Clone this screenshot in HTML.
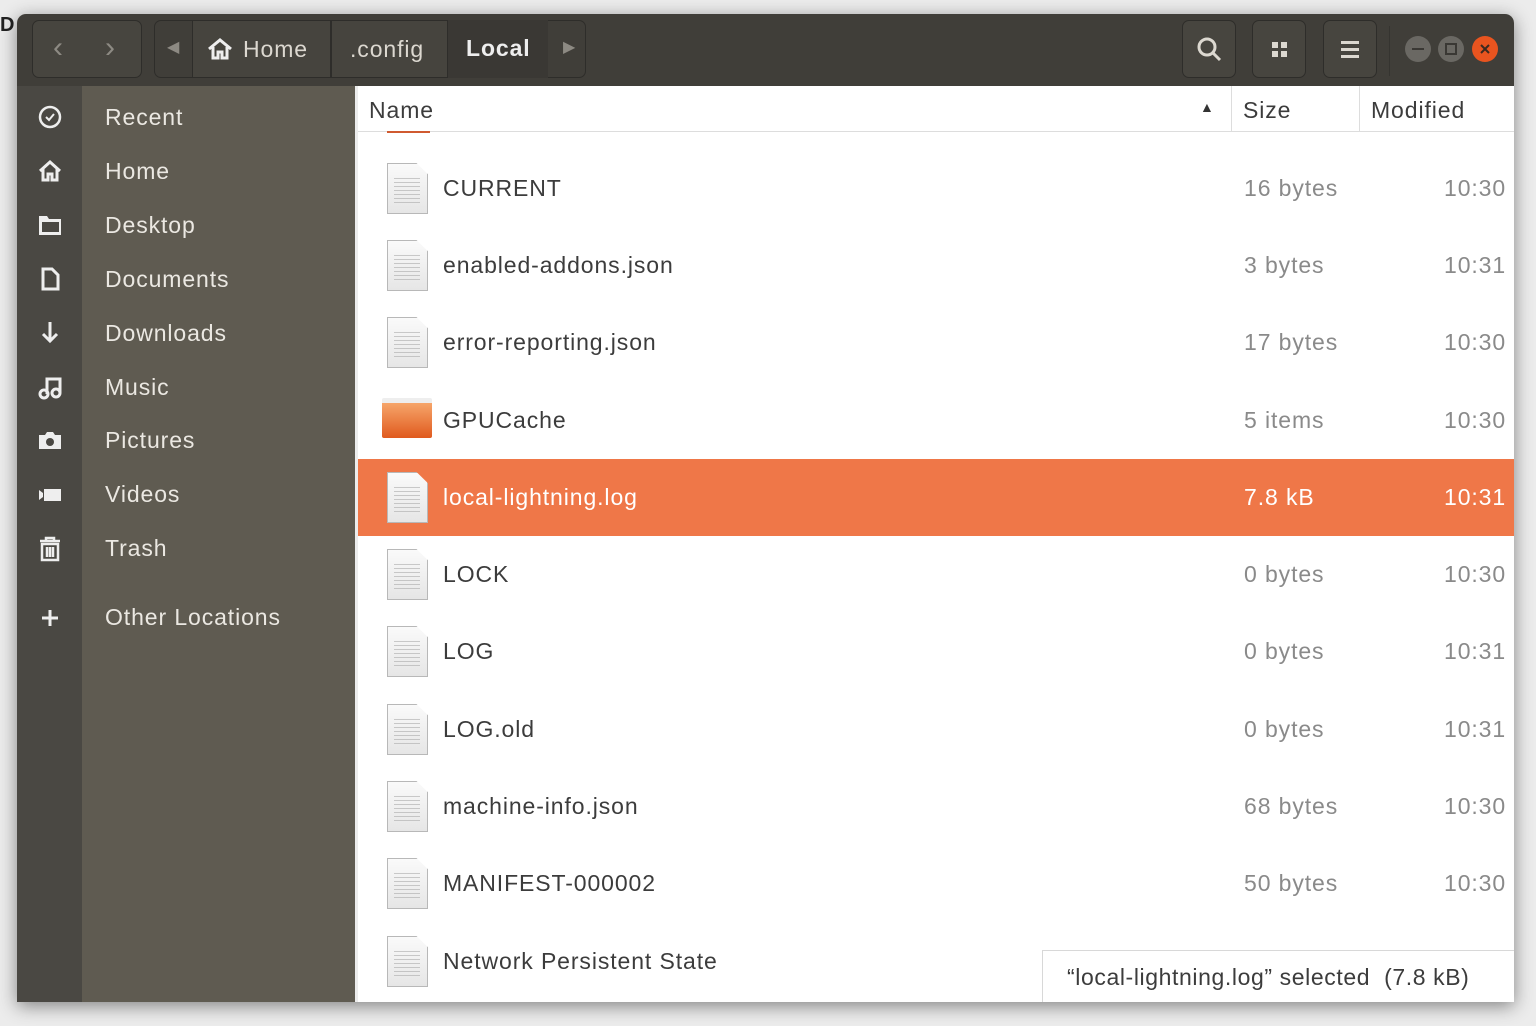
<!DOCTYPE html>
<html><head><meta charset="utf-8"><style>
*{margin:0;padding:0;box-sizing:border-box}
body{width:1536px;height:1026px;background:#ececec;position:relative;overflow:hidden;font-family:"Liberation Sans",sans-serif;letter-spacing:0.9px}
.win{position:absolute;left:17px;top:14px;width:1497px;height:988px;border-radius:9px 9px 0 0;overflow:hidden;box-shadow:0 4px 18px rgba(0,0,0,.45)}
.tb{position:absolute;left:0;top:0;width:100%;height:72px;background:#403e39}
.btn{position:absolute;top:6px;height:58px;border:1px solid #2e2d2a;border-radius:7px;background:#47453f;color:#dcd8d0}
.side1{position:absolute;left:0;top:72px;width:65px;height:916px;background:#4a4843}
.side2{position:absolute;left:65px;top:72px;width:273px;height:916px;background:#5f5b51}
.si{position:absolute;left:23px;font-size:23px;color:#ebe8e2}
.ic{position:absolute;left:20px;width:26px;height:26px}
.cont{position:absolute;left:341px;top:72px;width:1156px;height:916px;background:#fff}
.hdr{position:absolute;left:0;top:0;width:100%;height:46px;border-bottom:1px solid #ddd;font-size:23px;color:#3c3c3c}
.row{position:absolute;left:0;width:100%;height:77px;font-size:23px;color:#3c3c3c}
.row .n{position:absolute;left:85px;top:25px}
.row .s{position:absolute;left:886px;top:25px;color:#8a8a8a}
.row .m{position:absolute;left:1086px;top:25px;color:#8a8a8a}
.row.sel{background:#ef7748;color:#fff}
.row.sel .s,.row.sel .m{color:#fff}
.fi{position:absolute;left:29px;top:13px;width:41px;height:51px;background:linear-gradient(#fafafa,#e6e6e6);border:1px solid #b8b8b8;clip-path:polygon(0 0,72% 0,100% 22%,100% 100%,0 100%)}
.fi:after{content:"";position:absolute;left:6px;top:14px;width:26px;height:28px;background:repeating-linear-gradient(#aaa 0 1px,transparent 1px 4px);opacity:.6}
.fo{position:absolute;left:24px;top:16px;width:50px;height:40px;border-radius:2px;background:linear-gradient(#f6a56a,#e05a1e);border-top:5px solid #eee}
</style></head><body>
<div style="position:absolute;left:0;top:14px;font-size:20px;font-weight:bold;color:#222">D</div>
<div class="win">
 <div class="tb">
  <div class="btn" style="left:15px;width:110px"><span style="position:absolute;left:20px;top:10px;font-size:30px;color:#8d8a83">&lsaquo;</span><span style="position:absolute;left:72px;top:10px;font-size:30px;color:#8d8a83">&rsaquo;</span></div>
  <div class="btn" style="left:137px;width:432px;background:#403e39">
   <span style="position:absolute;left:12px;top:16px;font-size:16px;color:#8d8a83">&#9664;</span>
   <div style="position:absolute;left:37px;top:-1px;width:139px;height:58px;border:1px solid #2e2d2a;background:#46443e">
    <svg style="position:absolute;left:14px;top:16px" width="26" height="24" viewBox="0 0 26 24"><path d="M2 12L13 3l11 9M6 10v11h5v-6h4v6h5V10" fill="none" stroke="#eee" stroke-width="3"/></svg>
    <span style="position:absolute;left:50px;top:15px;font-size:23px">Home</span></div>
   <div style="position:absolute;left:176px;top:-1px;width:117px;height:58px;border:1px solid #2e2d2a;background:#46443e"><span style="position:absolute;left:18px;top:15px;font-size:23px">.config</span></div>
   <div style="position:absolute;left:293px;top:-1px;width:100px;height:58px;background:#3a3834"><span style="position:absolute;left:18px;top:15px;font-size:23px;font-weight:bold;color:#eee">Local</span></div>
   <span style="position:absolute;left:408px;top:16px;font-size:16px;color:#8d8a83">&#9654;</span>
  </div>
  <div class="btn" style="left:1165px;width:54px"><svg width="54" height="58" viewBox="0 0 54 58"><circle cx="24" cy="26" r="8" fill="none" stroke="#dcd8d0" stroke-width="3"/><path d="M30 32l7 7" stroke="#dcd8d0" stroke-width="3"/></svg></div>
  <div class="btn" style="left:1235px;width:54px"><svg width="54" height="58"><g fill="#dcd8d0"><rect x="19" y="21" width="6" height="6"/><rect x="28" y="21" width="6" height="6"/><rect x="19" y="30" width="6" height="6"/><rect x="28" y="30" width="6" height="6"/></g></svg></div>
  <div class="btn" style="left:1306px;width:54px"><svg width="54" height="58"><g fill="#dcd8d0"><rect x="17" y="20" width="18" height="3"/><rect x="17" y="27" width="18" height="3"/><rect x="17" y="34" width="18" height="3"/></g></svg></div>
  <div style="position:absolute;left:1372px;top:12px;width:1px;height:50px;background:#353430"></div>
  <svg style="position:absolute;left:1386px;top:20px" width="100" height="30" viewBox="0 0 100 30">
   <circle cx="15" cy="15" r="13" fill="#6a6863"/><path d="M9 15h12" stroke="#3a3834" stroke-width="2"/>
   <circle cx="48" cy="15" r="13" fill="#6a6863"/><rect x="43" y="10" width="10" height="10" fill="none" stroke="#3a3834" stroke-width="2"/>
   <circle cx="82" cy="15" r="13" fill="#e9541f"/><path d="M78 11l8 8M86 11l-8 8" stroke="#3a2a20" stroke-width="2"/>
  </svg>
 </div>
 <div class="side1">
  <svg class="ic" style="top:18px" viewBox="0 0 26 26"><circle cx="13" cy="13" r="10" fill="none" stroke="#eee" stroke-width="2.5"/><path d="M9 13l3 3 5-6" stroke="#eee" stroke-width="2" fill="none"/></svg>
  <svg class="ic" style="top:72px" viewBox="0 0 26 26"><path d="M3 13L13 4l10 9M6 11v11h5v-6h4v6h5V11" fill="none" stroke="#eee" stroke-width="3"/></svg>
  <svg class="ic" style="top:126px" viewBox="0 0 26 26"><path d="M2 4h8l2 3h12v16H2z" fill="#eee"/><rect x="5" y="10" width="17" height="10" fill="#4a4843"/></svg>
  <svg class="ic" style="top:180px" viewBox="0 0 26 26"><path d="M6 3h9l6 6v14H6z" fill="none" stroke="#eee" stroke-width="3"/></svg>
  <svg class="ic" style="top:234px" viewBox="0 0 26 26"><path d="M13 2v18M6 14l7 7 7-7" fill="none" stroke="#eee" stroke-width="3"/></svg>
  <svg class="ic" style="top:288px" viewBox="0 0 26 26"><circle cx="7" cy="20" r="4" fill="none" stroke="#eee" stroke-width="3"/><circle cx="19" cy="19" r="4" fill="none" stroke="#eee" stroke-width="3"/><path d="M10 20V5h13v14" fill="none" stroke="#eee" stroke-width="3"/></svg>
  <svg class="ic" style="top:342px" viewBox="0 0 26 26"><path d="M2 7h6l2-3h6l2 3h6v14H2z" fill="#eee"/><circle cx="13" cy="14" r="4" fill="#4a4843"/></svg>
  <svg class="ic" style="top:396px" viewBox="0 0 26 26"><path d="M2 8l4 3v4l-4 3zM7 7h17v12H7z" fill="#eee"/></svg>
  <svg class="ic" style="top:450px" viewBox="0 0 26 26"><path d="M3 5h20M9 5V2h8v3M5 8h16v16H5zM10 11v10M13 11v10M16 11v10" fill="none" stroke="#eee" stroke-width="2.5"/></svg>
  <svg class="ic" style="top:519px" viewBox="0 0 26 26"><path d="M13 5v16M5 13h16" stroke="#eee" stroke-width="3"/></svg>
 </div>
 <div class="side2">
  <div class="si" style="top:18px">Recent</div>
  <div class="si" style="top:72px">Home</div>
  <div class="si" style="top:126px">Desktop</div>
  <div class="si" style="top:180px">Documents</div>
  <div class="si" style="top:234px">Downloads</div>
  <div class="si" style="top:288px">Music</div>
  <div class="si" style="top:341px">Pictures</div>
  <div class="si" style="top:395px">Videos</div>
  <div class="si" style="top:449px">Trash</div>
  <div class="si" style="top:518px">Other Locations</div>
 </div>
 <div class="cont">
  <div class="hdr">
   <span style="position:absolute;left:11px;top:11px">Name</span>
   <span style="position:absolute;left:842px;top:13px;font-size:14px;color:#333">&#9650;</span>
   <div style="position:absolute;left:873px;top:0;width:1px;height:46px;background:#ddd"></div>
   <span style="position:absolute;left:885px;top:11px">Size</span>
   <div style="position:absolute;left:1001px;top:0;width:1px;height:46px;background:#ddd"></div>
   <span style="position:absolute;left:1013px;top:11px">Modified</span>
   <div style="position:absolute;left:29px;top:45px;width:43px;height:2px;background:#d05a30"></div>
  </div>
  <div class="row" style="top:64px"><div class="fi"></div><span class="n">CURRENT</span><span class="s">16 bytes</span><span class="m">10:30</span></div>
  <div class="row" style="top:141px"><div class="fi"></div><span class="n">enabled-addons.json</span><span class="s">3 bytes</span><span class="m">10:31</span></div>
  <div class="row" style="top:218px"><div class="fi"></div><span class="n">error-reporting.json</span><span class="s">17 bytes</span><span class="m">10:30</span></div>
  <div class="row" style="top:296px"><div class="fo"></div><span class="n">GPUCache</span><span class="s">5 items</span><span class="m">10:30</span></div>
  <div class="row sel" style="top:373px"><div class="fi"></div><span class="n">local-lightning.log</span><span class="s">7.8 kB</span><span class="m">10:31</span></div>
  <div class="row" style="top:450px"><div class="fi"></div><span class="n">LOCK</span><span class="s">0 bytes</span><span class="m">10:30</span></div>
  <div class="row" style="top:527px"><div class="fi"></div><span class="n">LOG</span><span class="s">0 bytes</span><span class="m">10:31</span></div>
  <div class="row" style="top:605px"><div class="fi"></div><span class="n">LOG.old</span><span class="s">0 bytes</span><span class="m">10:31</span></div>
  <div class="row" style="top:682px"><div class="fi"></div><span class="n">machine-info.json</span><span class="s">68 bytes</span><span class="m">10:30</span></div>
  <div class="row" style="top:759px"><div class="fi"></div><span class="n">MANIFEST-000002</span><span class="s">50 bytes</span><span class="m">10:30</span></div>
  <div class="row" style="top:837px"><div class="fi"></div><span class="n">Network Persistent State</span></div>
  <div style="position:absolute;left:684px;top:864px;width:480px;height:60px;background:#fff;border:1px solid #d8d8d8;font-size:23px;color:#3c3c3c;padding:13px 0 0 24px;letter-spacing:0.6px">“local-lightning.log” selected&nbsp; (7.8 kB)</div>
 </div>
</div>
</body></html>
